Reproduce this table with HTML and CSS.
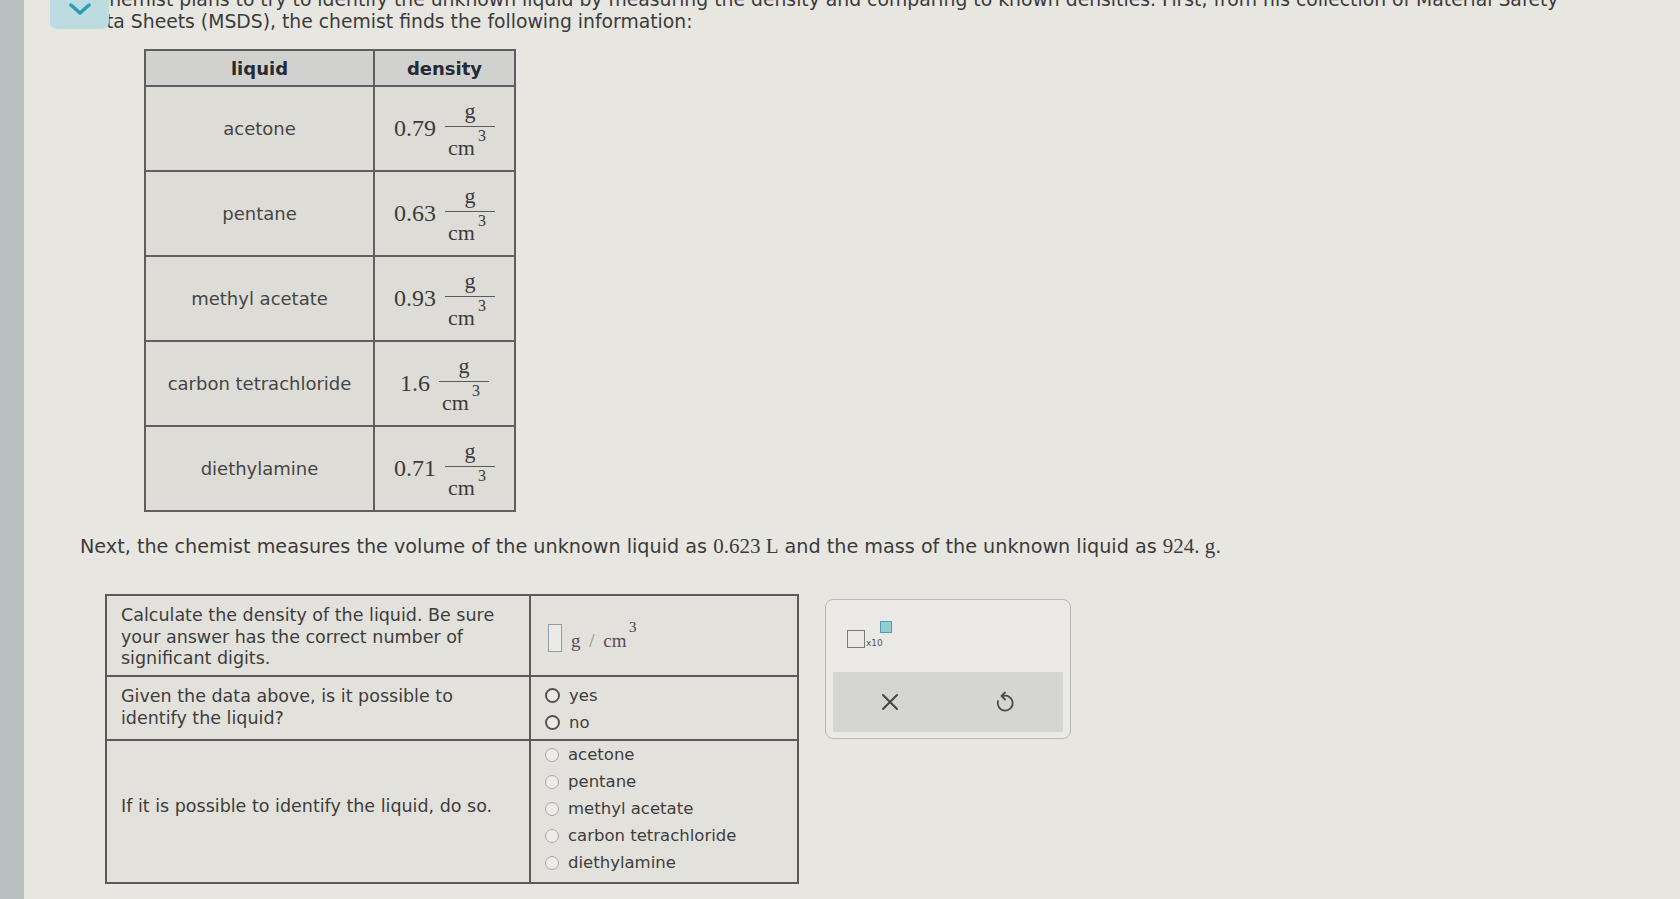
FILE: index.html
```html
<!DOCTYPE html>
<html lang="en">
<head>
<meta charset="utf-8">
<title>Density problem</title>
<link rel="stylesheet" href="styles.css">
</head>
<body>
<div class="screen">
  <div class="strip"></div>
  <main class="content">
    <div class="badge">
      <svg width="22" height="12" viewBox="0 0 22 12"><polyline points="2,2 11,10 20,2" fill="none" stroke="#2a9cb7" stroke-width="3.5" stroke-linecap="round" stroke-linejoin="round"/></svg>
    </div>
    <p class="intro">A chemist plans to try to identify the unknown liquid by measuring the density and comparing to known densities. First, from his collection of Material Safety<br>Data Sheets (MSDS), the chemist finds the following information:</p>

    <table class="data">
      <thead>
        <tr><th class="c1">liquid</th><th class="c2">density</th></tr>
      </thead>
      <tbody>
        <tr><td>acetone</td><td><span class="qty"><span class="num">0.79</span><span class="frac"><span class="top">g</span><span class="bot">cm<sup>3</sup></span></span></span></td></tr>
        <tr><td>pentane</td><td><span class="qty"><span class="num">0.63</span><span class="frac"><span class="top">g</span><span class="bot">cm<sup>3</sup></span></span></span></td></tr>
        <tr><td>methyl acetate</td><td><span class="qty"><span class="num">0.93</span><span class="frac"><span class="top">g</span><span class="bot">cm<sup>3</sup></span></span></span></td></tr>
        <tr><td>carbon tetrachloride</td><td><span class="qty"><span class="num">1.6</span><span class="frac"><span class="top">g</span><span class="bot">cm<sup>3</sup></span></span></span></td></tr>
        <tr><td>diethylamine</td><td><span class="qty"><span class="num">0.71</span><span class="frac"><span class="top">g</span><span class="bot">cm<sup>3</sup></span></span></span></td></tr>
      </tbody>
    </table>

    <p class="next">Next, the chemist measures the volume of the unknown liquid as <span class="serif">0.623 L</span> and the mass of the unknown liquid as <span class="serif">924. g</span>.</p>

    <div class="work">
      <table class="questions">
        <tr class="r1">
          <td class="q">Calculate the density of the liquid. Be sure your answer has the correct number of significant digits.</td>
          <td class="a"><span class="answer"><span class="inbox"></span><span class="unit">g <span class="slash">/</span> cm<sup>3</sup></span></span></td>
        </tr>
        <tr class="r2">
          <td class="q">Given the data above, is it possible to identify the liquid?</td>
          <td class="a">
            <div class="opt"><span class="radio"></span>yes</div>
            <div class="opt"><span class="radio"></span>no</div>
          </td>
        </tr>
        <tr class="r3">
          <td class="q mid">If it is possible to identify the liquid, do so.</td>
          <td class="a">
            <div class="opt off"><span class="radio"></span>acetone</div>
            <div class="opt off"><span class="radio"></span>pentane</div>
            <div class="opt off"><span class="radio"></span>methyl acetate</div>
            <div class="opt off"><span class="radio"></span>carbon tetrachloride</div>
            <div class="opt off"><span class="radio"></span>diethylamine</div>
          </td>
        </tr>
      </table>

      <div class="panel">
        <div class="tools">
          <span class="sci"><span class="sq"></span><span class="x10">x10</span><span class="exp"></span></span>
        </div>
        <div class="actions">
          <svg width="18" height="18" viewBox="0 0 18 18"><path d="M2 2 L16 16 M16 2 L2 16" stroke="#454545" stroke-width="2" fill="none" stroke-linecap="round"/></svg>
          <svg width="20" height="22" viewBox="0 0 20 22"><path d="M8 5 A7.5 7.5 0 1 1 3 10" fill="none" stroke="#4a4a4a" stroke-width="1.8" stroke-linecap="round"/><polyline points="10,1.5 6.5,5 10,8.5" fill="none" stroke="#4a4a4a" stroke-width="1.8" stroke-linecap="round" stroke-linejoin="round"/></svg>
        </div>
      </div>
    </div>
  </main>
</div>
</body>
</html>
```

FILE: styles.css
```css
html, body {
  margin: 0;
  padding: 0;
}
body {
  background: #e8e6e1;
  font-family: "DejaVu Sans", Verdana, sans-serif;
  color: #3b3b3b;
  overflow: hidden;
  height: 899px;
}
.screen {
  display: flex;
  height: 899px;
}
.strip {
  width: 24px;
  flex-shrink: 0;
  background: #b8bfbf;
}
.content {
  flex: 1;
  position: relative;
}
.badge {
  position: absolute;
  z-index: 1;
  left: 26px;
  top: -8px;
  width: 59px;
  height: 37px;
  background: #bddce1;
  border-radius: 0 0 7px 7px;
  display: flex;
  align-items: flex-start;
  justify-content: center;
  padding-top: 11px;
  box-sizing: border-box;
}
.intro {
  margin: -11px 0 0 56px;
  font-size: 18.8px;
  line-height: 22px;
  white-space: nowrap;
}
.serif {
  font-family: "Liberation Serif", "Times New Roman", serif;
  font-size: 21px;
}

/* density table */
.data {
  margin: 16px 0 0 120px;
  border-collapse: collapse;
  background: #dedcd7;
}
.data th, .data td {
  border: 2px solid #5e5e5e;
  text-align: center;
  vertical-align: middle;
  padding: 0;
}
.data th {
  height: 34px;
  background: #d1d2d0;
  font-size: 18px;
  font-weight: bold;
  color: #262a34;
}
.data .c1 { width: 227px; }
.data .c2 { width: 139px; }
.data td {
  height: 83px;
  font-size: 18px;
  color: #454545;
}
.qty {
  display: inline-flex;
  align-items: center;
  gap: 9px;
  font-family: "Liberation Serif", "Times New Roman", serif;
  color: #3b3b3b;
}
.num {
  font-size: 24px;
}
.frac {
  display: inline-flex;
  flex-direction: column;
  width: 50px;
  font-size: 22px;
  line-height: 21px;
}
.frac .top {
  text-align: center;
  padding-bottom: 5px;
  border-bottom: 1.5px solid #5a5a5a;
}
.frac .bot {
  position: relative;
  padding: 10px 0 0 3px;
  text-align: left;
}
.frac sup {
  position: absolute;
  left: 33px;
  top: 1px;
  font-size: 16px;
  line-height: 16px;
}

.next {
  margin: 22px 0 0 56px;
  font-size: 19.2px;
  line-height: 24px;
  white-space: nowrap;
}

/* question table */
.work {
  display: flex;
  align-items: flex-start;
  gap: 26px;
  margin: 35px 0 0 81px;
}
.questions {
  border-collapse: collapse;
  background: #e3e1dc;
  font-size: 17.5px;
  line-height: 21.5px;
  color: #3d3d3d;
}
.questions td {
  border: 2px solid #5a5a5a;
  padding: 0;
}
.questions .q {
  width: 396px;
  padding: 9px 12px 0 14px;
  vertical-align: top;
}
.questions .q.mid {
  vertical-align: middle;
  padding: 0 12px 10px 14px;
}
.questions .a {
  width: 252px;
  padding: 0 0 0 14px;
  vertical-align: top;
}
.r1 { height: 81px; }
.r1 .a { vertical-align: middle; padding-left: 17px; width: 249px; }
.r2 { height: 64px; }
.r2 .a { padding-top: 5px; }
.r3 { height: 143px; }
.r3 .a { padding-top: 0; }

.answer {
  display: inline-flex;
  align-items: flex-end;
  gap: 9px;
  margin-top: 10px;
}
.inbox {
  width: 12px;
  height: 26px;
  border: 1.5px solid #8e9daa;
  background: #eceae6;
}
.unit {
  font-family: "Liberation Serif", "Times New Roman", serif;
  font-size: 19px;
  line-height: 22px;
  color: #5a4a5a;
  position: relative;
}
.unit .slash {
  color: #8a8a8a;
  margin: 0 4px;
}
.unit sup {
  position: absolute;
  right: -10px;
  top: -14px;
  font-size: 15px;
  color: #444;
}

.opt {
  display: flex;
  align-items: center;
  height: 27px;
  gap: 9px;
  font-size: 16.5px;
}
.radio {
  width: 11px;
  height: 11px;
  border: 2px solid #555;
  border-radius: 50%;
  background: #ecebe7;
}
.opt.off .radio {
  border: 1.5px solid #a9a9a9;
  width: 12px;
  height: 12px;
}

/* answer panel */
.panel {
  margin-top: 5px;
  width: 246px;
  height: 140px;
  border: 1.5px solid #b9b9b7;
  border-radius: 8px;
  background: #ebe9e5;
  display: flex;
  flex-direction: column;
  padding: 0 7px 6px 7px;
  box-sizing: border-box;
}
.tools {
  flex: 1;
  padding: 30px 0 0 14px;
}
.sci {
  display: inline-flex;
  align-items: flex-end;
  position: relative;
}
.sq {
  width: 16px;
  height: 16px;
  border: 1.5px solid #7a7a7a;
}
.x10 {
  font-size: 9px;
  color: #555;
  margin-left: 1px;
  line-height: 10px;
}
.exp {
  position: absolute;
  left: 33px;
  top: -9px;
  width: 10px;
  height: 10px;
  background: #93cdd6;
  border: 1.5px solid #4f9db0;
}
.actions {
  height: 60px;
  background: #d5d5d3;
  display: flex;
  align-items: center;
  gap: 96px;
  padding: 0 0 0 48px;
}
```
